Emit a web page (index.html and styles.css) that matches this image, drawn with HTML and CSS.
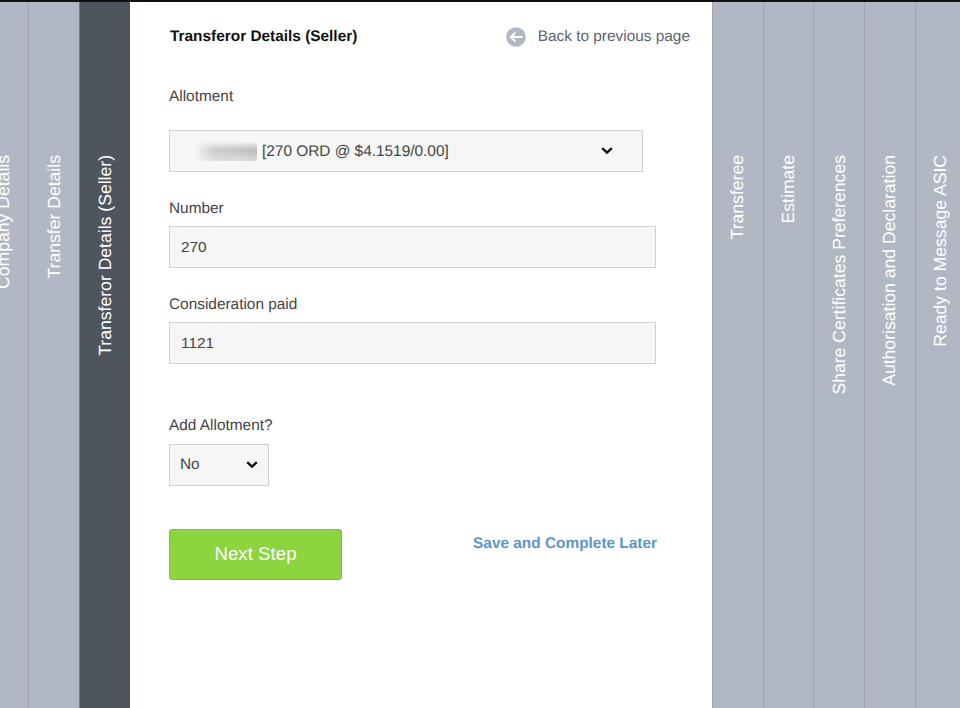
FILE: index.html
```html
<!DOCTYPE html>
<html lang="en">
<head>
    <meta charset="utf-8">
    <title>Transferor Details (Seller)</title>
    <link rel="stylesheet" href="styles.css">
</head>
<body>
    <div class="wizard">
        <div class="steps steps-done">
            <div class="step"><span>Company Details</span></div>
            <div class="step"><span>Transfer Details</span></div>
            <div class="step active"><span>Transferor Details (Seller)</span></div>
        </div>

        <div class="panel">
            <div class="panel-header">
                <h1>Transferor Details (Seller)</h1>
                <a class="back">
                    <svg width="20" height="20" viewBox="0 0 20 20">
                        <circle cx="10" cy="10" r="9.8" fill="#b2b8c3"/>
                        <path d="M16.5 10H4.8M9.3 5.7L4.8 10l4.5 4.3" fill="none" stroke="#fff" stroke-width="1.8"/>
                    </svg>
                    <span>Back to previous page</span>
                </a>
            </div>

            <div class="field allotment">
                <label>Allotment</label>
                <div class="control select-wide">
                    <span class="redacted"></span>
                    <span class="value">[270 ORD @ $4.1519/0.00]</span>
                    <svg class="chevron" width="12" height="8" viewBox="0 0 12 8">
                        <path d="M1.2 1.2L6 5.6l4.8-4.4" fill="none" stroke="#111" stroke-width="2.4"/>
                    </svg>
                </div>
            </div>

            <div class="field number">
                <label for="number">Number</label>
                <input class="control" type="text" id="number" value="270">
            </div>

            <div class="field paid">
                <label for="paid">Consideration paid</label>
                <input class="control" type="text" id="paid" value="1121">
            </div>

            <div class="field add">
                <label>Add Allotment?</label>
                <div class="control select-small">
                    <span class="value">No</span>
                    <svg class="chevron" width="12" height="8" viewBox="0 0 12 8">
                        <path d="M1.2 1.2L6 5.6l4.8-4.4" fill="none" stroke="#111" stroke-width="2.4"/>
                    </svg>
                </div>
            </div>

            <div class="actions">
                <button class="next">Next Step</button>
                <a class="save">Save and Complete Later</a>
            </div>
        </div>

        <div class="steps steps-todo">
            <div class="step"><span>Transferee</span></div>
            <div class="step"><span>Estimate</span></div>
            <div class="step"><span>Share Certificates Preferences</span></div>
            <div class="step"><span>Authorisation and Declaration</span></div>
            <div class="step"><span>Ready to Message ASIC</span></div>
        </div>
    </div>
</body>
</html>
```
FILE: styles.css
```css
* {
    box-sizing: border-box;
}
body {
    margin: 0;
    height: 708px;
    overflow: hidden;
    font-family: "Liberation Sans", Arial, sans-serif;
    font-size: 15.4px;
    color: #444;
    background-color: #fff;
    text-rendering: geometricPrecision;
}
.wizard {
    display: flex;
    height: 708px;
    border-top: 2px solid #111;
}
.steps {
    display: flex;
    flex: none;
}
.steps-done {
    width: 130px;
    justify-content: flex-end;
}
.steps-todo {
    width: 248px;
}
.step {
    flex: none;
    width: 50.7px;
    padding: 153px 1px 0 0;
    display: flex;
    justify-content: center;
    align-items: flex-start;
    background-color: #b2b8c3;
    border-left: 1px solid #a0a5af;
    color: #fff;
    font-size: 17.6px;
}
.steps-done .step {
    width: 51px;
}
.step span {
    writing-mode: vertical-rl;
    transform: rotate(180deg);
    white-space: nowrap;
    line-height: 20px;
}
.step.active {
    background-color: #4e555f;
    border-left-color: #777c85;
}
.panel {
    width: 582px;
    flex: none;
    padding: 25px 0 0 39px;
}
.panel-header {
    display: flex;
    justify-content: space-between;
    align-items: center;
    height: 20px;
    padding-right: 22px;
}
h1 {
    margin: 0 0 0 1px;
    font-size: 15.4px;
    color: #111;
}
.back {
    display: flex;
    align-items: center;
    gap: 12px;
    color: #5d636e;
}
label {
    display: block;
    height: 20px;
    line-height: 20px;
}
.control {
    display: flex;
    align-items: center;
    width: 487px;
    height: 42px;
    padding: 0 11px;
    border: 1px solid #d0d0d0;
    background-color: #f6f6f6;
    font-family: inherit;
    font-size: 15.4px;
    color: #444;
    outline: none;
}
.chevron {
    margin-left: auto;
}
.allotment {
    margin-top: 40px;
}
.allotment label {
    margin-bottom: 23px;
}
.select-wide {
    width: 474px;
    padding: 0 29px 0 25px;
}
.redacted {
    width: 62px;
    height: 20px;
    margin-right: 5px;
    background: linear-gradient(#f6f6f6, rgba(246, 246, 246, 0) 45%, rgba(246, 246, 246, 0.5)), linear-gradient(90deg, #f4f4f4, #cdcdcd 30%, #bcbcbc);
}
.select-wide .value {
    padding-top: 1px;
}
.number,
.paid {
    margin-top: 27px;
}
.number label,
.paid label {
    margin-bottom: 7px;
}
.add {
    margin-top: 52px;
}
.add label {
    margin-bottom: 8px;
}
.select-small {
    width: 100px;
    padding: 0 10px;
}
.actions {
    display: flex;
    justify-content: space-between;
    align-items: flex-start;
    margin-top: 43px;
    padding-right: 55px;
}
.next {
    width: 173px;
    height: 51px;
    padding-bottom: 3px;
    border: 1px solid #6fc535;
    border-radius: 3px;
    background-color: #8cd540;
    color: #fff;
    font-family: inherit;
    font-size: 18.7px;
}
.save {
    margin-top: 6px;
    font-weight: bold;
    line-height: 18px;
    color: #6094c8;
}
```
